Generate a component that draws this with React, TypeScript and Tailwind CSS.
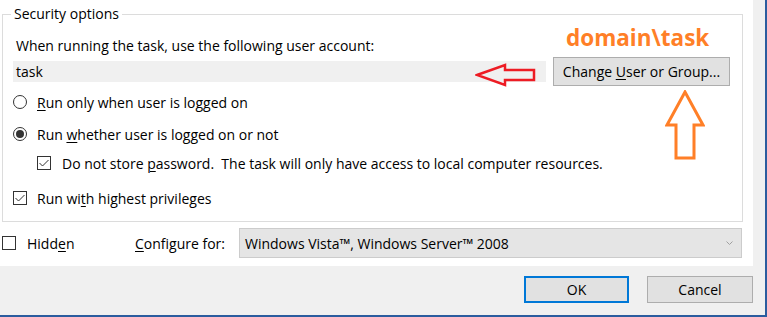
import React from 'react';

const font = { fontFamily: '"Open Sans", "Noto Sans", sans-serif' };

const Radio = ({ checked }: { checked?: boolean }) => (
  <span className="w-[14px] h-[14px] rounded-full border border-[#333333] bg-white flex items-center justify-center shrink-0">
    {checked && <span className="w-[8px] h-[8px] rounded-full bg-[#333333]" />}
  </span>
);

const Check = ({ checked }: { checked?: boolean }) => (
  <span className="w-[14px] h-[14px] border border-[#333333] bg-white flex items-center justify-center shrink-0">
    {checked && (
      <svg width="12" height="12" viewBox="0 0 12 12">
        <polyline points="1.5,6 4.5,9 10.5,3" fill="none" stroke="#333333" strokeWidth="1" />
      </svg>
    )}
  </span>
);

const Mn = ({ children }: { children: React.ReactNode }) => (
  <span className="underline underline-offset-2 decoration-1">{children}</span>
);

const App: React.FC = () => {
  return (
    <div
      className="w-[767px] h-[317px] bg-[#f0f0f0] border-r-2 border-b-2 border-[#2b5c9e] flex flex-col text-[14px] text-black overflow-hidden"
      style={font}
    >
      <div className="h-[266px] flex shrink-0">
        <div className="w-[753px] bg-white relative pl-[2px] pr-[11px]">
          <fieldset className="border border-[#dcdcdc] px-[10px] pb-[13px] mt-[5px] w-[741px]">
            <legend className="ml-[-2px] px-[3px] leading-[18px]">Security options</legend>
            <div className="mt-[12px] h-[20px] flex items-center pl-[3px]">
              When running the task, use the following user account:
            </div>
            <div className="mt-[2px] flex items-center gap-[7px]">
              <div className="w-[533px] h-[21px] bg-[#f0f0f0] flex items-center pl-[3px]">task</div>
              <button className="w-[177px] h-[29px] bg-[#e1e1e1] border border-[#adadad] flex items-center justify-center">
                <span>Change <Mn>U</Mn>ser or Group...</span>
              </button>
            </div>
            <div className="mt-[6px] h-[20px] flex items-center gap-[10px]">
              <Radio />
              <span><Mn>R</Mn>un only when user is logged on</span>
            </div>
            <div className="mt-[12px] h-[20px] flex items-center gap-[10px]">
              <Radio checked />
              <span>Run <Mn>w</Mn>hether user is logged on or not</span>
            </div>
            <div className="mt-[9px] h-[20px] flex items-center gap-[11px] pl-[24px]">
              <Check checked />
              <span>Do not store <Mn>p</Mn>assword.&nbsp; The task will only have access to local computer resources.</span>
            </div>
            <div className="mt-[15px] h-[20px] flex items-center gap-[10px]">
              <Check checked />
              <span>Run wi<Mn>t</Mn>h highest privileges</span>
            </div>
          </fieldset>

          <div className="mt-[6px] h-[30px] flex items-center">
            <Check />
            <span className="ml-[11px] w-[108px]">Hidd<Mn>e</Mn>n</span>
            <span className="w-[104px]"><Mn>C</Mn>onfigure for:</span>
            <div className="w-[503px] h-[30px] bg-[#e5e5e5] border border-[#cccccc] flex items-center justify-between pl-[5px] pr-[8px]">
              <span>Windows Vista™, Windows Server™ 2008</span>
              <svg width="7" height="5" viewBox="0 0 7 5">
                <polyline points="0.5,0.5 3.5,3.5 6.5,0.5" fill="none" stroke="#a0a0a0" strokeWidth="1" />
              </svg>
            </div>
          </div>

          {/* annotations */}
          <div
            className="absolute left-[566px] top-[21px] text-[22.5px] font-bold text-[#ff7f27]"
            style={font}
          >
            domain\task
          </div>
          <svg className="absolute left-[475px] top-[62px]" width="62" height="26" viewBox="0 0 62 26">
            <polygon
              points="2,13 30,3 30,8 59,8 59,18 30,18 30,23"
              fill="none"
              stroke="#ed1c24"
              strokeWidth="2.5"
              strokeLinejoin="miter"
            />
          </svg>
          <svg className="absolute left-[665px] top-[90px]" width="40" height="71" viewBox="0 0 40 71">
            <polygon
              points="20,2 38,35 29,35 29,68 11,68 11,35 2,35"
              fill="none"
              stroke="#ff7f27"
              strokeWidth="3"
            />
          </svg>
        </div>
        <div className="flex-1 bg-[#f0f0f0]" />
      </div>

      <div className="flex-1 flex items-center justify-end gap-[18px] pr-[12px] pb-[2px]">
        <button className="w-[105px] h-[27px] bg-[#e1e1e1] border-2 border-[#0078d7] flex items-center justify-center">
          OK
        </button>
        <button className="w-[106px] h-[27px] bg-[#e1e1e1] border border-[#adadad] flex items-center justify-center">
          Cancel
        </button>
      </div>
    </div>
  );
};

export default App;
